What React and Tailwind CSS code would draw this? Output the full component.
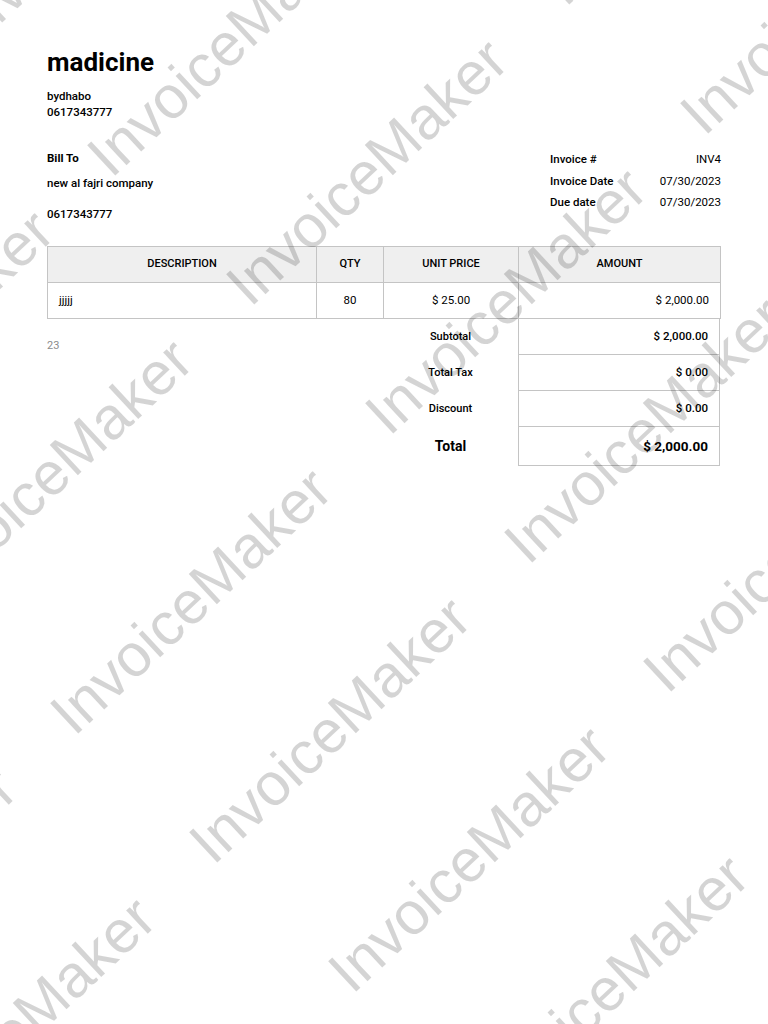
const marks = [];
for (let i = -3; i <= 8; i++) {
  for (let j = -3; j <= 3; j++) {
    const x = 112 + i * 139 + j * 315;
    const y = 180 + i * 129 - j * 300;
    if (x > -460 && x < 790 && y > -20 && y < 1460) marks.push({ x, y });
  }
}

function Watermarks() {
  return (
    <div className="pointer-events-none absolute inset-0 overflow-hidden">
      {marks.map((m, i) => (
        <div key={i} className="absolute h-0 w-0 -rotate-[43deg]" style={{ left: m.x, top: m.y }}>
          <span className="absolute left-0 top-[-51px] whitespace-nowrap font-['Liberation_Sans',Arial,sans-serif] text-[60px] leading-none text-[rgba(0,0,0,0.17)]">
            InvoiceMaker
          </span>
        </div>
      ))}
    </div>
  );
}

const items = [{ desc: "jjjjj", qty: "80", price: "$ 25.00", amount: "$ 2,000.00" }];

const totals = [
  { label: "Subtotal", value: "$ 2,000.00" },
  { label: "Total Tax", value: "$ 0.00" },
  { label: "Discount", value: "$ 0.00" },
];

export default function App() {
  return (
    <div className="relative h-[1024px] w-full overflow-hidden bg-white font-[Roboto,sans-serif] text-black">
      <div className="w-[768px] px-[47px] pt-[47px]">
        <h1 className="text-[26px] font-bold leading-[30px]">madicine</h1>
        <div className="mt-[11px] text-[11.5px] font-medium leading-4">
          <p>bydhabo</p>
          <p>0617343777</p>
        </div>

        <div className="mt-[30px] flex items-start justify-between">
          <div className="text-[11.5px] font-medium leading-4">
            <p className="font-bold">Bill To</p>
            <p className="mt-[9px]">new al fajri company</p>
            <p className="mt-[15px]">0617343777</p>
          </div>
          <div className="-mt-[1px] w-[171px] text-[11.5px] leading-[21.5px]">
            <div className="flex justify-between">
              <span className="font-medium">Invoice #</span>
              <span>INV4</span>
            </div>
            <div className="flex justify-between">
              <span className="font-medium">Invoice Date</span>
              <span>07/30/2023</span>
            </div>
            <div className="flex justify-between">
              <span className="font-medium">Due date</span>
              <span>07/30/2023</span>
            </div>
          </div>
        </div>

        <table className="mt-[24px] w-full table-fixed border-collapse text-[11.5px]">
          <colgroup>
            <col className="w-[269px]" />
            <col className="w-[67px]" />
            <col className="w-[135px]" />
            <col className="w-[202px]" />
          </colgroup>
          <thead>
            <tr className="h-[36px] bg-[#efefef] text-[11px]">
              <th className="border border-[#c4c4c4] font-medium">DESCRIPTION</th>
              <th className="border border-[#c4c4c4] font-medium">QTY</th>
              <th className="border border-[#c4c4c4] font-medium">UNIT PRICE</th>
              <th className="border border-[#c4c4c4] font-medium">AMOUNT</th>
            </tr>
          </thead>
          <tbody>
            {items.map((it) => (
              <tr key={it.desc} className="h-[36px]">
                <td className="border border-[#c4c4c4] px-[11px]">{it.desc}</td>
                <td className="border border-[#c4c4c4] text-center">{it.qty}</td>
                <td className="border border-[#c4c4c4] text-center">{it.price}</td>
                <td className="border border-[#c4c4c4] px-[11px] text-right">{it.amount}</td>
              </tr>
            ))}
          </tbody>
        </table>

        <div className="flex">
          <div className="w-[336px] pt-[19px] text-[11px] leading-4 text-[#8c8c8c]">23</div>
          <div className="w-[135px] text-[11px] font-medium">
            {totals.map((t) => (
              <div key={t.label} className="flex h-[36px] items-center justify-center">
                {t.label}
              </div>
            ))}
            <div className="flex h-[39px] items-center justify-center text-[14px] font-bold">Total</div>
          </div>
          <div className="w-[202px] text-[11.5px] font-medium">
            {totals.map((t) => (
              <div
                key={t.label}
                className="flex h-[36px] items-center justify-end border-x border-b border-[#c4c4c4] px-[11px]"
              >
                {t.value}
              </div>
            ))}
            <div className="flex h-[39px] items-center justify-end border-x border-b border-[#c4c4c4] px-[11px] text-[13.5px] font-bold">
              $ 2,000.00
            </div>
          </div>
        </div>
      </div>
      <Watermarks />
    </div>
  );
}
